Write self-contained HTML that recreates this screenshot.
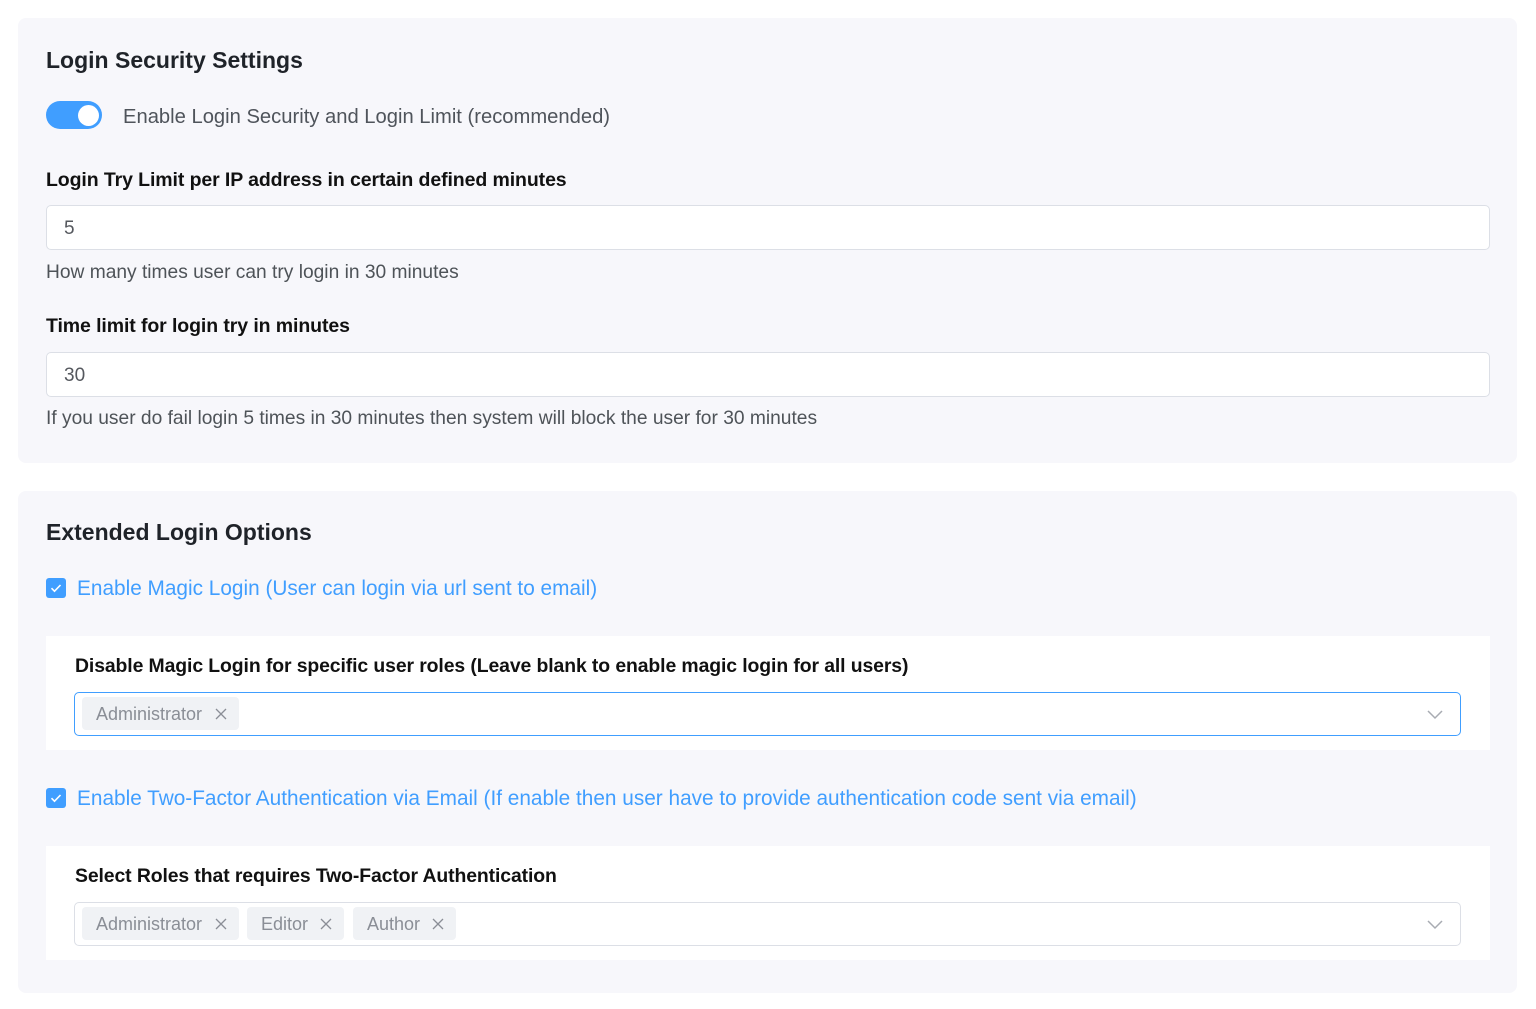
<!DOCTYPE html>
<html><head><meta charset="utf-8"><style>
*{box-sizing:border-box;margin:0;padding:0}
html,body{width:1536px;height:1009px;background:#fff;overflow:hidden}
body{position:relative;font-family:"Liberation Sans",Arial,sans-serif}
.card{position:absolute;left:18px;width:1499px;background:#f7f7fb;border-radius:8px}
.t{position:absolute;white-space:nowrap;line-height:24px;height:24px}
.title{font-size:23px;font-weight:bold;color:#1f2329}
.lbl{font-size:19.5px;font-weight:bold;color:#111;letter-spacing:-0.1px}
.help{font-size:19.2px;color:#4e5358}
.inp{position:absolute;left:46px;width:1444px;height:45px;background:#fff;border:1px solid #dcdfe6;border-radius:5px}
.inp span{position:absolute;left:17px;top:11px;font-size:19px;color:#55585e;line-height:24px}
.blue{font-size:20.8px;color:#409eff}
.cb{position:absolute;left:46px;width:20px;height:20px;background:#409eff;border-radius:3px}
.box{position:absolute;left:46px;width:1444px;background:#fff}
.sel{position:absolute;left:28px;width:1387px;height:44px;background:#fff;border:1px solid #dcdfe6;border-radius:5px}
.sel.f{border:1.5px solid #409eff}
.tag{position:absolute;top:4px;height:33px;background:#f0f2f5;border-radius:4px;font-size:18px;color:#8a8e96;line-height:34px;padding-left:14px}
.tag svg{position:absolute;right:12px;top:11px}
.chev{position:absolute;right:16px;top:15px}
</style></head><body>

<div class="card" style="top:18px;height:445px"></div>
<div class="t title" style="left:46px;top:48px">Login Security Settings</div>
<div style="position:absolute;left:46px;top:101px;width:56px;height:28px;border-radius:14px;background:#409eff"></div>
<div style="position:absolute;left:78px;top:105px;width:21px;height:21px;border-radius:50%;background:#fff"></div>
<div class="t" style="left:123px;top:105px;font-size:20.2px;color:#4f545b">Enable Login Security and Login Limit (recommended)</div>

<div class="t lbl" style="left:46px;top:168px">Login Try Limit per IP address in certain defined minutes</div>
<div class="inp" style="top:205px"><span>5</span></div>
<div class="t help" style="left:46px;top:261px">How many times user can try login in 30 minutes</div>

<div class="t lbl" style="left:46px;top:314px">Time limit for login try in minutes</div>
<div class="inp" style="top:352px"><span>30</span></div>
<div class="t help" style="left:46px;top:407px">If you user do fail login 5 times in 30 minutes then system will block the user for 30 minutes</div>

<div class="card" style="top:491px;height:502px"></div>
<div class="t title" style="left:46px;top:520px">Extended Login Options</div>

<div class="cb" style="top:578px"><svg width="20" height="20" viewBox="0 0 20 20"><path d="M5.5 10.2l3 3 6-6.2" fill="none" stroke="#fff" stroke-width="1.6"/></svg></div>
<div class="t blue" style="left:77px;top:577px">Enable Magic Login (User can login via url sent to email)</div>

<div class="box" style="top:636px;height:114px">
  <div class="t lbl" style="left:29px;top:18px;font-size:19.4px">Disable Magic Login for specific user roles (Leave blank to enable magic login for all users)</div>
  <div class="sel f" style="top:56px">
    <div class="tag" style="left:7px;width:157px">Administrator<svg width="12" height="12" viewBox="0 0 12 12"><path d="M1 1l10 10M11 1L1 11" stroke="#8a8e96" stroke-width="1.3"/></svg></div>
    <svg class="chev" width="18" height="12" viewBox="0 0 18 12"><path d="M2 3l7 7 7-7" fill="none" stroke="#a8abb2" stroke-width="1.5"/></svg>
  </div>
</div>

<div class="cb" style="top:788px"><svg width="20" height="20" viewBox="0 0 20 20"><path d="M5.5 10.2l3 3 6-6.2" fill="none" stroke="#fff" stroke-width="1.6"/></svg></div>
<div class="t blue" style="left:77px;top:787px">Enable Two-Factor Authentication via Email (If enable then user have to provide authentication code sent via email)</div>

<div class="box" style="top:846px;height:114px">
  <div class="t lbl" style="left:29px;top:18px;font-size:19.4px">Select Roles that requires Two-Factor Authentication</div>
  <div class="sel" style="top:56px">
    <div class="tag" style="left:7px;width:157px">Administrator<svg width="12" height="12" viewBox="0 0 12 12"><path d="M1 1l10 10M11 1L1 11" stroke="#8a8e96" stroke-width="1.3"/></svg></div>
    <div class="tag" style="left:172px;width:97px">Editor<svg width="12" height="12" viewBox="0 0 12 12"><path d="M1 1l10 10M11 1L1 11" stroke="#8a8e96" stroke-width="1.3"/></svg></div>
    <div class="tag" style="left:278px;width:103px">Author<svg width="12" height="12" viewBox="0 0 12 12"><path d="M1 1l10 10M11 1L1 11" stroke="#8a8e96" stroke-width="1.3"/></svg></div>
    <svg class="chev" width="18" height="12" viewBox="0 0 18 12"><path d="M2 3l7 7 7-7" fill="none" stroke="#a8abb2" stroke-width="1.5"/></svg>
  </div>
</div>
</body></html>
